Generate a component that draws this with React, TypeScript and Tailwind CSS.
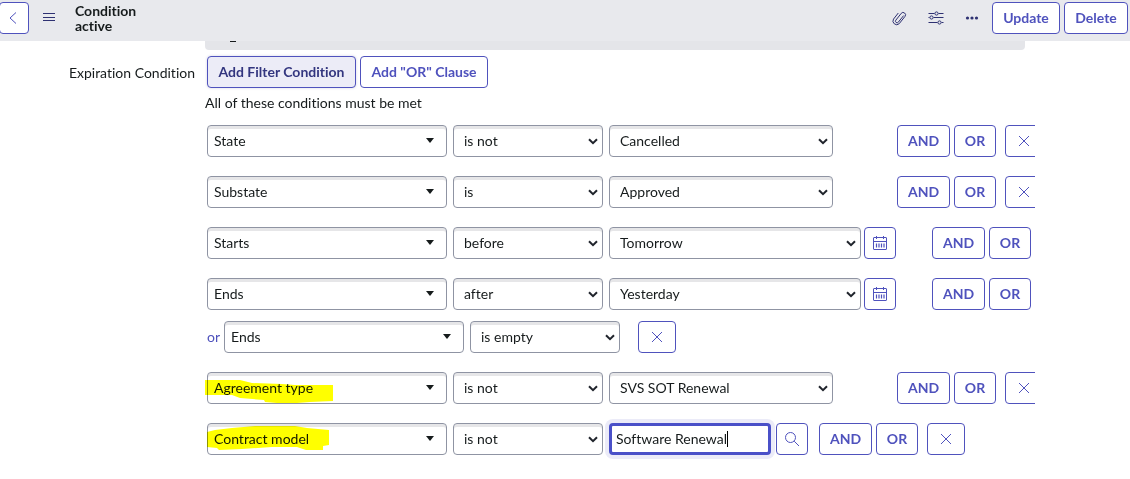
import type { ReactNode } from 'react';

type Condition = {
  field: string;
  operator: string;
  value?: string;
  kind: 'choice' | 'date' | 'reference' | 'empty';
  highlight?: string;
};

const conditions: Condition[] = [
  { field: 'State', operator: 'is not', value: 'Cancelled', kind: 'choice' },
  { field: 'Substate', operator: 'is', value: 'Approved', kind: 'choice' },
  { field: 'Starts', operator: 'before', value: 'Tomorrow', kind: 'date' },
  { field: 'Ends', operator: 'after', value: 'Yesterday', kind: 'date' },
  { field: 'Ends', operator: 'is empty', kind: 'empty' },
  {
    field: 'Agreement type',
    operator: 'is not',
    value: 'SVS SOT Renewal',
    kind: 'choice',
    highlight: 'M-2 8 L33 8 L45 11 L75 12 L88 13 L126 13 L126 29 L103 30 L90 31 L70 31 L58 30 L57 28 L33 26 L25 23 L-2 23 Z',
  },
  {
    field: 'Contract model',
    operator: 'is not',
    value: 'Software Renewal',
    kind: 'reference',
    highlight: 'M0 9 L8 7 L25 5 L48 3 L88 3 L100 5 L122 7 L122 22 L116 23 L116 27 L99 27 L90 24 L65 24 L35 26 L12 27 L10 25 L0 24 Z',
  },
];

const buttonClass =
  'flex h-8 shrink-0 items-center justify-center rounded-[4px] border border-[#4f52bd] text-sm font-bold whitespace-nowrap text-[#4f52bd]';

const Icon = ({ children, className }: { children: ReactNode; className: string }) => (
  <svg className={className} viewBox="0 0 16 16" fill="none" stroke="currentColor" aria-hidden="true">
    {children}
  </svg>
);

const CloseIcon = () => (
  <Icon className="h-4 w-4">
    <path d="M3 3l10 10M13 3L3 13" />
  </Icon>
);

const CalendarIcon = () => (
  <Icon className="h-4 w-4">
    <rect x="1.5" y="2.5" width="13" height="12" rx="0.5" />
    <path d="M1.5 6.5h13M4.5 1v3M11.5 1v3" />
    <path d="M4.5 8.5v4M7 8.5v4M9.5 8.5v4M12 8.5v4" strokeWidth="1.2" />
  </Icon>
);

const SearchIcon = () => (
  <Icon className="h-4 w-4">
    <circle cx="6.5" cy="6.5" r="5" />
    <path d="M10.2 10.2L15 15" />
  </Icon>
);

type SelectBoxProps = {
  label: string;
  value: string;
  width: string;
  picker?: boolean;
  highlight?: string;
};

const SelectBox = ({ label, value, width, picker, highlight }: SelectBoxProps) => (
  <div className={`relative shrink-0 ${width}`}>
    <select
      aria-label={label}
      defaultValue={value}
      className={`block h-8 w-full appearance-none rounded-[4px] border border-[#8f94a3] bg-white text-sm text-[#161b1c] shadow-[inset_0_3px_0_#e6e6e8] ${picker ? 'pl-[6px]' : 'pl-[10px]'}`}
    >
      <option>{value}</option>
    </select>
    {picker ? (
      <svg className="pointer-events-none absolute top-[13px] right-3 h-[6px] w-[9px]" viewBox="0 0 9 6" aria-hidden="true">
        <path d="M0 0h8L4 5z" fill="#161b1c" />
      </svg>
    ) : (
      <svg className="pointer-events-none absolute top-[13px] right-[5px] h-[7px] w-[10px]" viewBox="0 0 10 7" aria-hidden="true">
        <path d="M1 1.2l4 4 4-4" fill="none" stroke="#20242c" strokeWidth="2" />
      </svg>
    )}
    {highlight && (
      <svg className="pointer-events-none absolute top-0 left-0 h-8 w-[130px] overflow-visible mix-blend-multiply" viewBox="0 0 130 32" aria-hidden="true">
        <path d={highlight} fill="#ffff00" />
      </svg>
    )}
  </div>
);

const RemoveButton = () => (
  <button type="button" aria-label="Remove condition" className={`${buttonClass} w-[38px]`}>
    <CloseIcon />
  </button>
);

const ConditionRow = ({ condition }: { condition: Condition }) => {
  const { field, operator, value = '', kind, highlight } = condition;

  return (
    <div className={`flex items-center pl-[2px] ${kind === 'empty' ? '-mt-2' : ''}`}>
      {kind === 'empty' && <span className="w-[17px] shrink-0 text-sm text-[#4f52bd]">or</span>}
      <div className="flex shrink-0 gap-[6px]">
        <SelectBox label="Field" value={field} width="w-[240px]" picker highlight={highlight} />
        <SelectBox label="Operator" value={operator} width="w-[150px]" />
        {kind === 'choice' && <SelectBox label="Value" value={value} width="w-[224px]" />}
        {kind === 'date' && <SelectBox label="Value" value={value} width="w-[252px]" />}
        {kind === 'reference' && (
          <div className="flex h-8 w-[162px] items-center rounded-[4px] border-3 border-[#4a50c8] bg-white pl-1 shadow-[0_0_0_4px_#ebebf8]">
            <input
              type="text"
              aria-label="Value"
              defaultValue={value}
              size={1}
              className="field-sizing-content bg-transparent text-sm text-[#161b1c] outline-none"
            />
            <span className="h-4 w-px bg-black" />
          </div>
        )}
      </div>
      {kind === 'date' && (
        <button type="button" aria-label="Choose date" className={`${buttonClass} ml-[3px] w-8`}>
          <CalendarIcon />
        </button>
      )}
      {kind === 'reference' && (
        <button type="button" aria-label="Look up value" className={`${buttonClass} ml-[5px] w-8`}>
          <SearchIcon />
        </button>
      )}
      {kind !== 'empty' && (
        <div className={`flex shrink-0 gap-1 ${kind === 'choice' ? 'ml-16' : kind === 'date' ? 'ml-9' : 'ml-[11px]'}`}>
          <button type="button" className={`${buttonClass} w-[53px]`}>AND</button>
          <button type="button" className={`${buttonClass} w-[42px]`}>OR</button>
        </div>
      )}
      {kind !== 'date' && (
        <div className={kind === 'empty' ? 'ml-[18px]' : 'ml-[9px]'}>
          <RemoveButton />
        </div>
      )}
    </div>
  );
};

const Header = () => (
  <header className="flex h-[41px] items-start bg-[#e8e9ed] pt-[2px] pr-[2px] text-[#2e3172]">
    <button type="button" aria-label="Back" className={`${buttonClass} -ml-px w-[30px] bg-white`}>
      <svg className="h-4 w-4" viewBox="0 0 16 16" fill="none" stroke="currentColor" aria-hidden="true">
        <path d="M10 2.5L4 8l6 5.5" />
      </svg>
    </button>
    <button type="button" aria-label="Menu" className="ml-[14px] flex h-8 items-center">
      <svg className="h-3 w-3" viewBox="0 0 12 12" fill="none" stroke="currentColor" aria-hidden="true">
        <path d="M0 1.5h12M0 5.5h12M0 8.5h12" />
      </svg>
    </button>
    <h1 className="ml-5 pt-px text-sm leading-[15px] font-bold text-[#161b1c]">
      Condition
      <br />
      active
    </h1>
    <div className="ml-auto flex items-center">
      <button type="button" aria-label="Attachments" className="p-px">
        <Icon className="h-4 w-4">
          <path d="M12.6 5.6L7.3 12.2a1.6 1.6 0 0 1-2.5-2l5.4-6.8a2.4 2.4 0 0 1 3.8 3L8.2 13.7a3.7 3.7 0 0 1-5.7-4.6L7.3 3" />
        </Icon>
      </button>
      <button type="button" aria-label="Personalize form" className="ml-5">
        <Icon className="h-4 w-4">
          <path d="M0.5 3.5h6M10.5 3.5h5M0.5 7.5h1M5.5 7.5h10M0.5 12.5h9M13.5 12.5h2" />
          <circle cx="8.5" cy="3.5" r="1.6" />
          <circle cx="3.5" cy="7.5" r="1.6" />
          <circle cx="11.5" cy="12.5" r="1.6" />
        </Icon>
      </button>
      <button type="button" aria-label="More options" className="ml-5">
        <svg className="h-4 w-4" viewBox="0 0 16 16" fill="currentColor" aria-hidden="true">
          <circle cx="3.5" cy="8" r="1.6" />
          <circle cx="8" cy="8" r="1.6" />
          <circle cx="12.5" cy="8" r="1.6" />
        </svg>
      </button>
      <button type="button" className={`${buttonClass} ml-3 w-[68px] bg-white`}>Update</button>
      <button type="button" className={`${buttonClass} ml-1 w-16 bg-white`}>Delete</button>
    </div>
  </header>
);

const App = () => {
  return (
    <div className="min-h-screen bg-white font-['Lato',sans-serif] text-sm text-[#161b1c] [font-variant-ligatures:none]">
      <Header />
      <main className="flex pr-[95px]">
        <div className="w-[205px] shrink-0 pt-[22px] pr-[10px] text-right whitespace-nowrap">Expiration Condition</div>
        <div className="min-w-0 flex-1 overflow-hidden pb-6">
          {/* tail end of the field that has scrolled under the header */}
          <div className="mr-[10px] h-[9px] rounded-b-[4px] bg-[#e4e5e9] pl-[25px]">
            <div className="h-px w-[6px] bg-[#161b1c]" />
          </div>
          <div className="mt-[6px] flex gap-1 pl-[2px]">
            <button type="button" className={`${buttonClass} w-[149px] bg-[#ececf7] text-[#33367f] shadow-[0_0_3px_#d5d5e5]`}>
              Add Filter Condition
            </button>
            <button type="button" className={`${buttonClass} w-32`}>Add "OR" Clause</button>
          </div>
          <p className="mt-[5px]">All of these conditions must be met</p>
          <div className="mt-3 flex flex-col gap-[19px]">
            {conditions.map((condition, index) => (
              <ConditionRow key={index} condition={condition} />
            ))}
          </div>
        </div>
      </main>
    </div>
  );
};

export default App;
